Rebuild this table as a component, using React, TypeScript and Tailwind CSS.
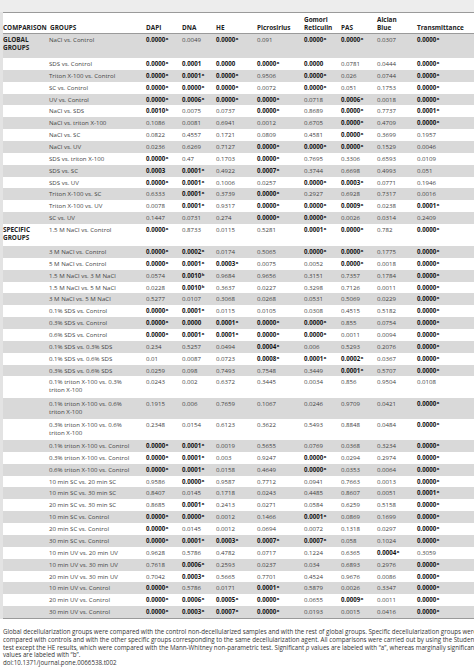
// Table of p values for the decellularization comparisons
import React from 'react';

type Cell = string; // "0.0000*a" => bold with superscript a, "0.0001*" => bold only

interface Row {
  label: React.ReactNode;
  values: Cell[];
  group?: React.ReactNode;
  size?: 'single' | 'double' | 'first' | 'firstSpecific';
}

const headers: React.ReactNode[] = [
  'DAPI',
  'DNA',
  'HE',
  'Picrosirius',
  <>Gomori<br />Reticulin</>,
  'PAS',
  <>Alcian<br />Blue</>,
  'Transmittance',
];

const globalRows: Row[] = [
  { label: 'NaCl vs. Control', group: <>GLOBAL<br />GROUPS</>, size: 'first', values: ['0.0000*a', '0.0049', '0.0000*a', '0.091', '0.0000*a', '0.0000*a', '0.0307', '0.0000*a'] },
  { label: 'SDS vs. Control', values: ['0.0000*a', '0.0001*', '0.0000*', '0.0000*a', '0.0000*', '0.0781', '0.0444', '0.0000*a'] },
  { label: 'Triton X-100 vs. Control', values: ['0.0000*a', '0.0001*a', '0.0000*a', '0.9506', '0.0000*a', '0.026', '0.0744', '0.0000*a'] },
  { label: 'SC vs. Control', values: ['0.0000*a', '0.0000*a', '0.0000*a', '0.0072', '0.0000*a', '0.051', '0.1753', '0.0000*a'] },
  { label: 'UV vs. Control', values: ['0.0000*a', '0.0006*a', '0.0000*a', '0.0000*a', '0.0718', '0.0006*a', '0.0018', '0.0000*a'] },
  { label: 'NaCl vs. SDS', values: ['0.0010*b', '0.0075', '0.0737', '0.0000*a', '0.8689', '0.0000*a', '0.7737', '0.0001*a'] },
  { label: 'NaCl vs. triton X-100', values: ['0.1086', '0.0081', '0.6941', '0.0012', '0.6705', '0.0000*a', '0.4709', '0.0000*a'] },
  { label: 'NaCl vs. SC', values: ['0.0822', '0.4557', '0.1721', '0.0809', '0.4581', '0.0000*a', '0.3699', '0.1957'] },
  { label: 'NaCl vs. UV', values: ['0.0236', '0.6269', '0.7127', '0.0000*a', '0.0000*a', '0.0000*a', '0.1529', '0.0046'] },
  { label: 'SDS vs. triton X-100', values: ['0.0000*a', '0.47', '0.1703', '0.0000*a', '0.7695', '0.3306', '0.6593', '0.0109'] },
  { label: 'SDS vs. SC', values: ['0.0003*', '0.0001*a', '0.4922', '0.0007*a', '0.3744', '0.6698', '0.4993', '0.051'] },
  { label: 'SDS vs. UV', values: ['0.0000*a', '0.0001*a', '0.1006', '0.0257', '0.0000*a', '0.0003*a', '0.0771', '0.1946'] },
  { label: 'Triton X-100 vs. SC', values: ['0.6333', '0.0001*a', '0.3739', '0.0000*a', '0.2927', '0.6928', '0.7317', '0.0016'] },
  { label: 'Triton X-100 vs. UV', values: ['0.0078', '0.0001*a', '0.9317', '0.0000*a', '0.0000*a', '0.0009*a', '0.0238', '0.0001*a'] },
  { label: 'SC vs. UV', values: ['0.1447', '0.0731', '0.274', '0.0000*a', '0.0000*a', '0.0026', '0.0314', '0.2409'] },
];

const specificRows: Row[] = [
  { label: '1.5 M NaCl vs. Control', group: <>SPECIFIC<br />GROUPS</>, size: 'firstSpecific', values: ['0.0000*a', '0.8733', '0.0115', '0.5281', '0.0001*a', '0.0000*a', '0.782', '0.0000*a'] },
  { label: '3 M NaCl vs. Control', values: ['0.0000*a', '0.0002*a', '0.0174', '0.5065', '0.0000*a', '0.0000*a', '0.1775', '0.0000*a'] },
  { label: '5 M NaCl vs. Control', values: ['0.0000*a', '0.0001*a', '0.0003*a', '0.0075', '0.0052', '0.0000*a', '0.0018', '0.0000*a'] },
  { label: '1.5 M NaCl vs. 3 M NaCl', values: ['0.0574', '0.0010*b', '0.9684', '0.9656', '0.3151', '0.7357', '0.1784', '0.0000*a'] },
  { label: '1.5 M NaCl vs. 5 M NaCl', values: ['0.0228', '0.0010*b', '0.3637', '0.0227', '0.3298', '0.7126', '0.0011', '0.0000*a'] },
  { label: '3 M NaCl vs. 5 M NaCl', values: ['0.5277', '0.0107', '0.3068', '0.0268', '0.0531', '0.5069', '0.0229', '0.0000*a'] },
  { label: '0.1% SDS vs. Control', values: ['0.0000*a', '0.0001*a', '0.0115', '0.0105', '0.0308', '0.4515', '0.5182', '0.0000*a'] },
  { label: '0.3% SDS vs. Control', values: ['0.0000*a', '0.0000*', '0.0001*a', '0.0000*a', '0.0000*a', '0.855', '0.0754', '0.0000*a'] },
  { label: '0.6% SDS vs. Control', values: ['0.0000*a', '0.0001*a', '0.0001*a', '0.0000*a', '0.0000*a', '0.0011', '0.0094', '0.0000*a'] },
  { label: '0.1% SDS vs. 0.3% SDS', values: ['0.234', '0.5257', '0.0494', '0.0004*a', '0.006', '0.5293', '0.2076', '0.0000*a'] },
  { label: '0.1% SDS vs. 0.6% SDS', values: ['0.01', '0.0087', '0.0723', '0.0008*a', '0.0001*a', '0.0002*a', '0.0367', '0.0000*a'] },
  { label: '0.3% SDS vs. 0.6% SDS', values: ['0.0259', '0.098', '0.7493', '0.7548', '0.3449', '0.0001*a', '0.5707', '0.0000*a'] },
  { label: <>0.1% triton X-100 vs. 0.3%<br />triton X-100</>, size: 'double', values: ['0.0243', '0.002', '0.6372', '0.3445', '0.0034', '0.856', '0.9504', '0.0108'] },
  { label: <>0.1% triton X-100 vs. 0.6%<br />triton X-100</>, size: 'double', values: ['0.1915', '0.006', '0.7659', '0.1067', '0.0246', '0.9709', '0.0421', '0.0000*a'] },
  { label: <>0.3% triton X-100 vs. 0.6%<br />triton X-100</>, size: 'double', values: ['0.2348', '0.0154', '0.6123', '0.3622', '0.5493', '0.8848', '0.0484', '0.0000*a'] },
  { label: '0.1% triton X-100 vs. Control', values: ['0.0000*a', '0.0001*a', '0.0019', '0.5655', '0.0769', '0.0368', '0.3234', '0.0000*a'] },
  { label: '0.3% triton X-100 vs. Control', values: ['0.0000*a', '0.0001*a', '0.003', '0.9247', '0.0000*a', '0.0294', '0.2974', '0.0000*a'] },
  { label: '0.6% triton X-100 vs. Control', values: ['0.0000*a', '0.0001*a', '0.0158', '0.4649', '0.0000*a', '0.0353', '0.0064', '0.0000*a'] },
  { label: '10 min SC vs. 20 min SC', values: ['0.9586', '0.0000*a', '0.9587', '0.7712', '0.0941', '0.7663', '0.0013', '0.0000*a'] },
  { label: '10 min SC vs. 30 min SC', values: ['0.8407', '0.0145', '0.1718', '0.0243', '0.4485', '0.8607', '0.0051', '0.0001*a'] },
  { label: '20 min SC vs. 30 min SC', values: ['0.8685', '0.0001*a', '0.2413', '0.0271', '0.0584', '0.6259', '0.5158', '0.0000*a'] },
  { label: '10 min SC vs. Control', values: ['0.0000*a', '0.0000*a', '0.0012', '0.1466', '0.0001*a', '0.0869', '0.1699', '0.0000*a'] },
  { label: '20 min SC vs. Control', values: ['0.0000*a', '0.0145', '0.0012', '0.0694', '0.0072', '0.1318', '0.0297', '0.0000*a'] },
  { label: '30 min SC vs. Control', values: ['0.0000*a', '0.0001*a', '0.0003*a', '0.0007*a', '0.0007*a', '0.058', '0.1024', '0.0000*a'] },
  { label: '10 min UV vs. 20 min UV', values: ['0.9628', '0.5786', '0.4782', '0.0717', '0.1224', '0.6365', '0.0004*a', '0.3059'] },
  { label: '10 min UV vs. 30 min UV', values: ['0.7618', '0.0006*a', '0.2593', '0.0237', '0.034', '0.6893', '0.2976', '0.0000*a'] },
  { label: '20 min UV vs. 30 min UV', values: ['0.7042', '0.0003*a', '0.5665', '0.7701', '0.4524', '0.9676', '0.0086', '0.0000*a'] },
  { label: '10 min UV vs. Control', values: ['0.0000*a', '0.5786', '0.0171', '0.0001*a', '0.5879', '0.0026', '0.3347', '0.0000*a'] },
  { label: '20 min UV vs. Control', values: ['0.0000*a', '0.0006*a', '0.0005*a', '0.0000*a', '0.0655', '0.0009*a', '0.0011', '0.0000*a'] },
  { label: '30 min UV vs. Control', values: ['0.0000*a', '0.0003*a', '0.0007*a', '0.0000*a', '0.0193', '0.0015', '0.0416', '0.0000*a'] },
];

const cols = 'grid grid-cols-[46px_97px_36px_34px_41px_47px_37px_36px_40px_57px]';

const heights = {
  single: 'h-[11.86px]',
  double: 'h-[21.2px]',
  first: 'h-[24px]',
  firstSpecific: 'h-[22px]',
};

function Value({ v }: { v: Cell }) {
  if (!v.includes('*')) return <span className="text-[#444]">{v}</span>;
  const [num, sup] = v.split('*');
  return (
    <span className="font-bold text-[#111]">
      {num}
      {sup && <span className="relative -top-[2px] ml-[0.5px] text-[4.2px] font-bold">{sup}</span>}
    </span>
  );
}

function TableRow({ row, shaded }: { row: Row; shaded: boolean }) {
  return (
    <div className={`${cols} ${heights[row.size ?? 'single']} ${shaded ? 'bg-[#d9d9d9]' : 'bg-white'} pt-[2px]`}>
      <div className="font-bold text-[#222] leading-[8px] text-[6.4px]">{row.group}</div>
      <div className="text-[#444] leading-[8px] whitespace-nowrap">{row.label}</div>
      {row.values.map((v, i) => (
        <div key={i} className="leading-[8px] whitespace-nowrap">
          <Value v={v} />
        </div>
      ))}
    </div>
  );
}

export default function App() {
  const all = [...globalRows, ...specificRows];
  return (
    <div className="w-[474px] h-[668px] overflow-hidden bg-white font-['Open_Sans',sans-serif] text-[6.1px]">
      {/* top band */}
      <div className="h-[12px] bg-[#ededed]" />
      <div className="flex">
        <div className="w-[3px] shrink-0 bg-[#e3e3e3]" />
        <div className="flex-1 border-t border-b border-[#9a9a9a]">
          {/* header */}
          <div className={`${cols} h-[21px] items-end pb-[1px] border-b border-[#9a9a9a] font-bold text-[#222] text-[6.4px] leading-[8px]`}>
            <div>COMPARISON</div>
            <div className="pl-[1px]">GROUPS</div>
            {headers.map((h, i) => (
              <div key={i}>{h}</div>
            ))}
          </div>
          {all.map((row, i) => (
            <TableRow key={i} row={row} shaded={i % 2 === 0} />
          ))}
        </div>
      </div>
      {/* caption */}
      <div className="pl-[3px] pt-[9px] text-[#333] text-[6.2px] leading-[7.8px] whitespace-nowrap">
        <div>Global decellularization groups were compared with the control non-decellularized samples and with the rest of global groups. Specific decellularization groups were</div>
        <div>compared with controls and with the other specific groups corresponding to the same decellularization agent. All comparisons were carried out by using the Student’s <i>t</i></div>
        <div>test except the HE results, which were compared with the Mann-Whitney non-parametric test. Significant <i>p</i> values are labeled with “a”, whereas marginally significant <i>p</i></div>
        <div>values are labeled with “b”.</div>
        <div>doi:10.1371/journal.pone.0066538.t002</div>
      </div>
    </div>
  );
}
